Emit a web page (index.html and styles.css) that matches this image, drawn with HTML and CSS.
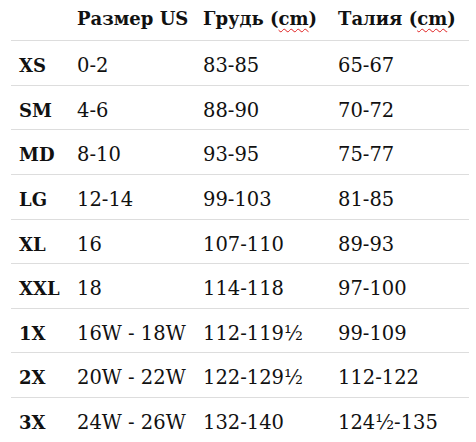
FILE: index.html
```html
<!DOCTYPE html>
<html lang="ru">
<head>
<meta charset="utf-8">
<link rel="stylesheet" href="styles.css">
</head>
<body>
<div class="chart">
  <div class="row head">
    <div class="cell"></div>
    <div class="cell">Размер US</div>
    <div class="cell">Грудь (<span class="spell">cm</span>)</div>
    <div class="cell">Талия (<span class="spell">cm</span>)</div>
  </div>
  <div class="row"><div class="cell size">XS</div><div class="cell">0-2</div><div class="cell">83-85</div><div class="cell">65-67</div></div>
  <div class="row"><div class="cell size">SM</div><div class="cell">4-6</div><div class="cell">88-90</div><div class="cell">70-72</div></div>
  <div class="row"><div class="cell size">MD</div><div class="cell">8-10</div><div class="cell">93-95</div><div class="cell">75-77</div></div>
  <div class="row"><div class="cell size">LG</div><div class="cell">12-14</div><div class="cell">99-103</div><div class="cell">81-85</div></div>
  <div class="row"><div class="cell size">XL</div><div class="cell">16</div><div class="cell">107-110</div><div class="cell">89-93</div></div>
  <div class="row"><div class="cell size">XXL</div><div class="cell">18</div><div class="cell">114-118</div><div class="cell">97-100</div></div>
  <div class="row"><div class="cell size">1X</div><div class="cell">16W - 18W</div><div class="cell">112-119½</div><div class="cell">99-109</div></div>
  <div class="row"><div class="cell size">2X</div><div class="cell">20W - 22W</div><div class="cell">122-129½</div><div class="cell">112-122</div></div>
  <div class="row"><div class="cell size">3X</div><div class="cell">24W - 26W</div><div class="cell">132-140</div><div class="cell">124½-135</div></div>
</div>
</body>
</html>
```

FILE: styles.css
```css
html, body {
  margin: 0;
  padding: 0;
  background: #ffffff;
}

.chart {
  margin-left: 11px;
  width: 458px;
  font-family: "DejaVu Serif", serif;
  font-size: 19.5px;
  color: #111111;
}

.row {
  display: grid;
  grid-template-columns: 58px 126px 135px 139px;
  height: 44.625px;
  box-sizing: border-box;
  border-top: 1px solid #dddddd;
}

.row.head {
  height: 40px;
  border-top: none;
  font-weight: bold;
  font-size: 18px;
}

.cell {
  padding-left: 8px;
  padding-top: 14px;
  line-height: 21px;
  white-space: nowrap;
}

.head .cell {
  padding-top: 8px;
}

.size {
  font-weight: bold;
  font-size: 18px;
}

.spell {
  text-decoration: underline wavy #e02020;
  text-decoration-thickness: 1px;
  text-underline-offset: 3px;
}
```
